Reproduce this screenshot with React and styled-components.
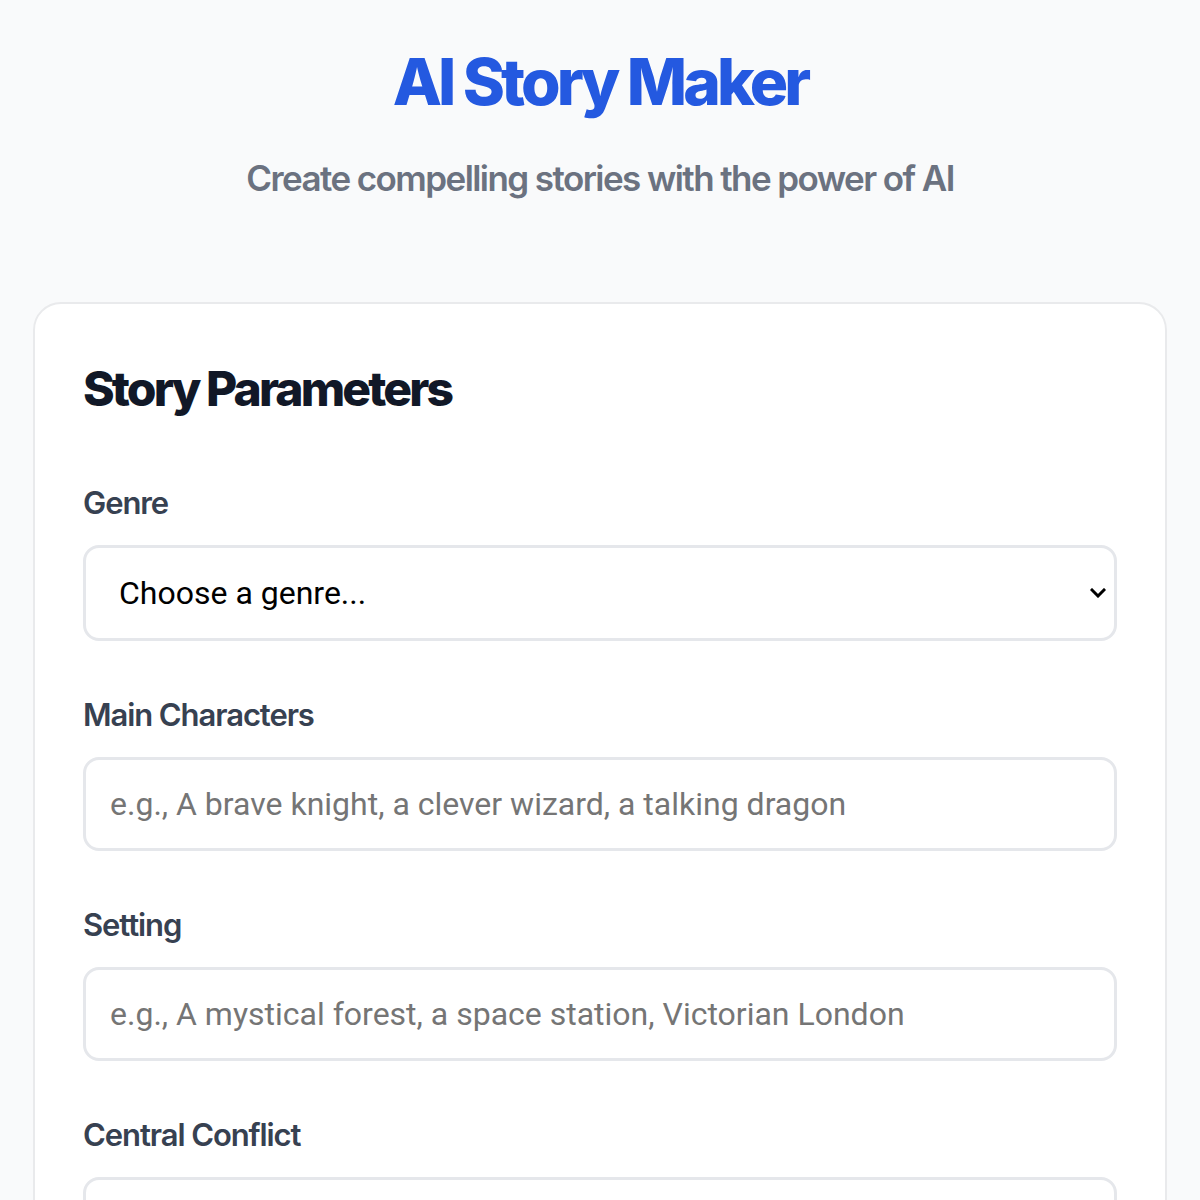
import React from 'react';
import styled, { createGlobalStyle } from 'styled-components';

const GlobalStyle = createGlobalStyle`
    * {
        box-sizing: border-box;
    }

    body {
        margin: 0;
        background-color: #f9fafb;
        font-family: 'Inter', 'Noto Sans', sans-serif;
    }
`;

const fields = [
    { label: 'Main Characters', placeholder: 'e.g., A brave knight, a clever wizard, a talking dragon' },
    { label: 'Setting', placeholder: 'e.g., A mystical forest, a space station, Victorian London' },
    { label: 'Central Conflict', placeholder: 'e.g., A quest to find a lost treasure, a battle against evil' },
];

const App = () => {
    return (
        <Page>
            <GlobalStyle />
            <Header>
                <Title>AI Story Maker</Title>
                <Subtitle>Create compelling stories with the power of AI</Subtitle>
            </Header>
            <Card>
                <CardTitle>Story Parameters</CardTitle>
                <Field>
                    <Label>Genre</Label>
                    <SelectWrap>
                        <Select defaultValue="">
                            <option value="">Choose a genre...</option>
                            <option value="fantasy">Fantasy</option>
                            <option value="scifi">Science Fiction</option>
                            <option value="mystery">Mystery</option>
                        </Select>
                        <Chevron viewBox="0 0 16 10" aria-hidden="true">
                            <path d="M2 2l6 6 6-6" fill="none" stroke="#000" strokeWidth="3" strokeLinecap="square" />
                        </Chevron>
                    </SelectWrap>
                </Field>
                {fields.map((f) => (
                    <Field key={f.label}>
                        <Label>{f.label}</Label>
                        <Input type="text" placeholder={f.placeholder} />
                    </Field>
                ))}
            </Card>
        </Page>
    );
};

export default App;

const Page = styled.div`
    padding: 40px 33px 0;
    min-height: 1200px;
`;

const Header = styled.header`
    text-align: center;
    margin-bottom: 102px;
`;

const Title = styled.h1`
    margin: 0;
    font-size: 64px;
    font-weight: 800;
    letter-spacing: -0.06em;
    line-height: 84px;
    color: #2459e0;
`;

const Subtitle = styled.p`
    margin: 32px 0 0;
    font-size: 35px;
    font-weight: 600;
    letter-spacing: -0.045em;
    line-height: 44px;
    color: #6b7280;
`;

const Card = styled.section`
    background-color: #fff;
    border: 2px solid #e9eaec;
    border-radius: 28px;
    padding: 55px 48px 48px;
`;

const CardTitle = styled.h2`
    margin: 0 0 64px;
    font-size: 48px;
    font-weight: 800;
    letter-spacing: -0.06em;
    line-height: 60px;
    color: #111827;
`;

const Field = styled.div`
    display: flex;
    flex-direction: column;
    gap: ${(p) => (p.$tight ? '20px' : '22px')};
    margin-bottom: 54px;
`;

const Label = styled.label`
    font-size: 31px;
    font-weight: 600;
    letter-spacing: -0.035em;
    line-height: 40px;
    color: #374151;
`;

const controlBase = `
    width: 100%;
    border: 3px solid #e5e7eb;
    border-radius: 16px;
    background-color: #fff;
    font-family: 'Roboto', sans-serif;
    font-size: 32px;
    outline: none;
`;

const SelectWrap = styled.div`
    position: relative;
`;

const Select = styled.select`
    ${controlBase}
    display: block;
    height: 96px;
    appearance: none;
    padding: 0 60px 0 33px;
    color: #000;
`;

const Chevron = styled.svg`
    position: absolute;
    right: 11px;
    top: 50%;
    width: 16px;
    height: 10px;
    margin-top: -5px;
    pointer-events: none;
`;

const Input = styled.input`
    ${controlBase}
    height: 94px;
    padding: 0 24px;
    color: #111;

    &::placeholder {
        color: #757575;
    }
`;
